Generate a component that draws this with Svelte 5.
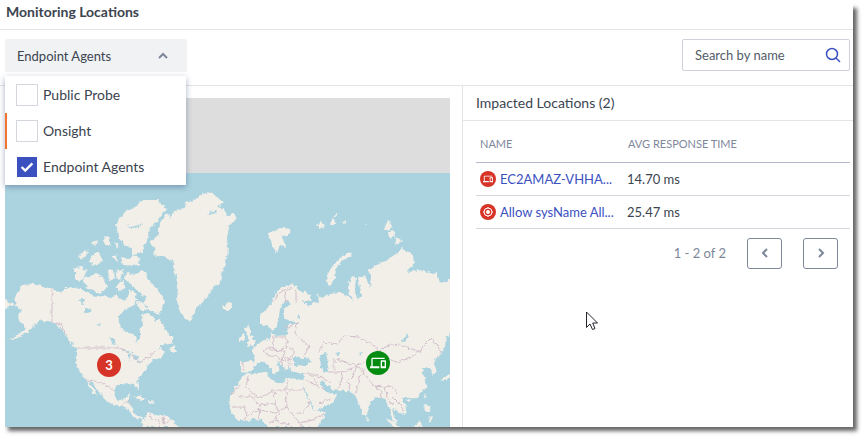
<script lang="ts">
    interface AgentType {
        id: string;
        label: string;
        checked: boolean;
        active?: boolean;
    }

    interface Location {
        name: string;
        kind: "device" | "probe";
        response: string;
    }

    let menuOpen = $state(true);
    let search = $state("");

    let agentTypes: AgentType[] = $state([
        { id: "public", label: "Public Probe", checked: false },
        { id: "onsight", label: "Onsight", checked: false, active: true },
        { id: "endpoint", label: "Endpoint Agents", checked: true },
    ]);

    const locations: Location[] = [
        { name: "EC2AMAZ-VHHA...", kind: "device", response: "14.70 ms" },
        { name: "Allow sysName All...", kind: "probe", response: "25.47 ms" },
    ];

    const land = [
        // North America
        "M5 299L10 302L17 305L14 299L17 294L22 286L30 283L42 286L52 289L60 292L64 289L70 287L80 289L88 292L96 297L104 296L111 298L116 294L121 299L125 301L128 296L130 290L135 293L137 300L132 306L124 310L118 317L120 327L128 333L135 336L137 343L140 337L140 330L143 325L142 315L148 314L153 317L155 322L160 318L163 325L168 333L173 339L173 343L163 345L157 350L162 348L165 353L160 358L153 360L147 365L145 370L142 375L137 380L139 390L137 389L134 384L128 383L123 385L117 385L114 390L115 397L118 401L123 400L126 396L131 395L129 400L127 403L133 407L134 413L137 416L143 417L142 419L136 418L130 413L126 408L120 406L112 404L104 399L103 396L97 390L92 382L89 381L94 389L97 395L92 392L89 385L87 380L83 377L78 369L76 365L77 357L77 349L73 345L67 337L62 330L55 323L47 322L40 320L35 325L28 332L20 336L5 342L20 333L26 328L20 322L17 317L21 310L15 305L5 308Z",
        // South America
        "M142 427L143 420L147 413L152 412L155 415L163 415L170 418L175 424L181 427Z",
        // Greenland
        "M149 243L157 236L160 223L167 213L170 218L177 208L184 210L187 200L193 202L200 195L206 193L213 194L218 198L223 202L217 208L225 208L227 216L233 213L237 218L230 225L227 237L228 253L223 270L221 283L213 288L207 297L202 303L198 307L193 315L191 322L185 318L180 312L177 302L178 285L175 273L172 260L163 257L153 255L156 249Z",
        // Arctic islands
        "M123 215L128 210L133 208L138 203L146 200L157 200L166 208L160 218L150 228L147 240L142 252L134 254L130 247L124 244L118 237L116 225L119 218Z",
        "M121 257L130 259L133 255L140 258L139 266L123 265Z",
        "M75 268L82 267L87 272L80 282L75 279Z",
        "M83 277L90 276L97 273L103 278L108 287L100 293L92 291L86 287Z",
        "M127 272L134 275L143 270L148 280L158 290L165 302L162 308L158 315L150 310L143 303L147 298L140 293L132 285L126 280Z",
        "M108 271L114 269L115 279L109 281ZM117 270L124 269L120 280L116 276ZM116 286L122 280L126 287L120 292Z",
        "M79 256L86 249L88 253L81 260ZM91 256L99 252L103 262L94 265L88 261ZM103 236L108 237L111 246L106 245ZM91 243L97 240L95 247ZM112 258L117 255L118 262ZM114 242L119 244L118 249Z",
        "M136 302L143 303L147 309L141 311Z",
        "M221 304L225 306L228 302L232 303L233 307L227 311L222 309Z",
        "M168 348L174 346L177 352L171 352Z",
        // Caribbean
        "M132 396L140 396L147 400L141 400ZM148 401L155 402L153 404L148 403Z",
        // Svalbard, Franz Josef Land and Novaya Zemlya
        "M268 233L274 231L278 230L283 227L291 231L287 237L281 235L286 247L280 245L276 253L272 244Z",
        "M317 225L322 222L325 227L319 229ZM329 223L334 219L337 225L331 225ZM341 222L346 221L344 224ZM334 215L337 214L337 217ZM365 223L367 223L366 224Z",
        "M328 284L326 277L333 265L341 257L350 252L352 255L342 261L336 270L334 280L331 285Z",
        "M385 224L389 220L392 227L389 230L384 231ZM388 231L394 230L395 238L389 237ZM397 236L402 241L395 245Z",
        // Scandinavia, Russia and Asia
        "M260 320L260 315L269 307L272 303L275 293L283 287L292 284L300 290L310 295L311 301L302 301L308 306L313 303L319 302L317 293L320 298L326 296L330 293L340 292L350 297L354 301L350 294L348 285L352 276L356 277L355 291L357 300L361 295L358 277L365 276L370 287L371 278L368 270L377 265L387 260L397 253L402 248L413 255L414 263L407 272L423 270L432 274L437 273L440 283L450 280L460 280L460 331L450 331L447 337L444 350L438 358L433 361L437 372L433 376L430 368L422 368L424 377L427 387L417 397L407 398L402 399L407 408L405 415L398 412L393 407L394 415L398 424L395 423L390 413L387 403L383 397L377 397L370 403L368 411L366 416L362 413L357 397L352 393L347 391L335 390L327 388L320 383L328 393L337 395L333 402L315 411L310 400L303 385L304 373L292 373L290 367L284 371L280 365L276 362L280 370L274 374L268 365L262 361L255 366L252 371L243 373L240 371L240 362L255 361L252 350L257 345L262 342L270 338L272 332L276 336L287 335L288 325L300 323L290 321L284 318L284 309L290 303L286 300L280 308L279 317L276 328L272 331L267 326L262 326Z",
        // Africa
        "M230 397L237 384L245 374L258 373L267 372L268 378L280 383L288 378L303 380L303 388L309 400L313 410L326 412L323 418L317 427L268 427L263 420L253 419L243 422L237 419L232 413L229 407Z",
        // British Isles
        "M245 328L249 325L250 333L255 341L255 345L246 346L249 340ZM239 337L244 334L245 340L239 342Z",
        // Japan, Taiwan, Philippines and Sri Lanka
        "M440 379L446 376L450 374L450 378L442 381ZM424 394L427 395L425 399ZM424 404L429 405L430 413L425 411ZM428 417L433 416L431 422ZM366 416L369 419L367 421Z",
        "M386 418L392 421L400 427L394 427ZM412 427L420 420L422 427ZM406 400L410 399L409 402Z",
    ];

    const water = [
        // Black Sea, Caspian Sea and Aral Sea
        "M293 360L296 356L302 359L307 357L312 362L305 365L295 366Z",
        "M320 356L325 353L328 357L327 362L329 371L324 373L321 367Z",
        "M336 354L339 352L339 356Z",
        // Adriatic and Persian Gulf
        "M276 360L284 367L286 371L282 370Z",
        "M320 383L325 389L331 391L334 389L329 387L323 381Z",
        // Great Lakes and northern lakes
        "M123 350L129 350L133 353L127 354ZM128 355L131 354L129 362L128 361ZM133 354L138 357L137 361L134 359ZM136 362L142 360L140 363Z",
        "M110 337L113 337L116 345L112 344ZM95 325L101 323L99 326ZM84 311L88 308L92 311L86 314ZM78 300L85 299L83 304Z",
        // Baikal and Ladoga
        "M402 341L409 333L408 337L404 342ZM296 317L299 315L299 319ZM358 354L364 353L361 356Z",
        // Sounds of Ellesmere Island
        "M124 223L131 227L142 224L141 226L132 229ZM208 213L216 210L217 213L211 215Z",
    ];

    const borders = [
        "M52 289V322L60 324L67 335M78 348H118L125 350L133 356L138 362L150 357L156 350M87 380L101 382L107 386L114 391M122 406L126 401L132 404M150 413L151 419L158 420L161 427M164 416L163 424L170 420",
        "M274 303L278 294L284 290L292 287L296 291L296 303M285 291L287 302M284 326L290 327L297 323L295 333L300 339L309 346L304 356M272 337L286 337L287 346L280 351L270 347L264 350M274 338L273 347M287 346L294 350L291 360L284 358M262 350L270 357L277 355L283 365M243 362L243 371M270 350L285 351L282 360L291 363L288 369",
        "M319 352L323 342L337 344L344 336L359 337L375 346L379 351L366 360L356 366L334 358L334 370M379 351L392 344L405 346L420 352L423 346L431 338L441 351L437 358M379 351L385 358L397 362L410 358L421 349M356 366L363 372L368 379L374 386L383 387L392 386L397 393M328 372L343 372L357 366L353 376L348 381L350 391M343 372L341 382L338 389M357 366L365 370L359 377L357 390L354 394M304 374L311 374L321 377L330 383M305 380L318 386L325 390M311 374L318 385M318 404L330 399M385 386L387 397L393 405M393 397L399 403L404 411M374 386L382 391L380 397",
        "M241 383L230 395M248 376L246 388L259 398L265 395L275 390L286 390L288 379M288 390H305M239 397H252L259 405L275 403L274 390M286 390L287 407L293 415L304 412L310 401M232 407L244 407L247 415L244 421M247 415L260 410L275 413L287 407M260 410L258 420M275 403L279 413L274 421L268 424M293 415L300 423L312 420L324 414M300 423L302 427M274 421L290 425",
    ];
</script>

{#snippet deviceIcon()}
    <svg class="device-icon" viewBox="0 0 24 24" aria-hidden="true">
        <path
            fill="currentColor"
            d="M4 6h18V4H4c-1.1 0-2 .9-2 2v11H0v3h14v-3H4V6zm19 2h-6c-.55 0-1 .45-1 1v10c0 .55.45 1 1 1h6c.55 0 1-.45 1-1V9c0-.55-.45-1-1-1zm-1 9h-4v-7h4v7z"
        />
    </svg>
{/snippet}

<main class="window">
    <header class="title-bar">
        <h1>Monitoring Locations</h1>
    </header>

    <div class="toolbar">
        <div class="dropdown">
            <button
                class="dropdown-toggle"
                aria-expanded={menuOpen}
                onclick={() => (menuOpen = !menuOpen)}
            >
                Endpoint Agents
                <svg class="chevron" class:closed={!menuOpen} viewBox="0 0 10 10" aria-hidden="true">
                    <path d="M1 7l4-4 4 4" />
                </svg>
            </button>
            {#if menuOpen}
                <div class="dropdown-menu">
                    {#each agentTypes as type (type.id)}
                        <label class="option" class:active={type.active}>
                            <input type="checkbox" bind:checked={type.checked} />
                            <svg class="tick" viewBox="0 0 20 20" aria-hidden="true">
                                <path d="M4 10l4 4 8-8" />
                            </svg>
                            <span>{type.label}</span>
                        </label>
                    {/each}
                </div>
            {/if}
        </div>

        <div class="search">
            <input
                type="text"
                aria-label="Search by name"
                placeholder="Search by name"
                bind:value={search}
            />
            <button class="search-btn" aria-label="Search">
                <svg viewBox="0 0 16 16" aria-hidden="true">
                    <circle cx="7" cy="7" r="5.5" />
                    <path d="M11 11l4 4" />
                </svg>
            </button>
        </div>
    </div>

    <div class="content">
        <section class="map-pane">
            <div class="map">
                <svg class="world" viewBox="5 173 445 254" preserveAspectRatio="xMidYMin slice" aria-hidden="true">
                    <defs>
                        <!-- roughens the coastlines -->
                        <filter
                            id="coast"
                            x="0"
                            y="0"
                            width="1"
                            height="1"
                            color-interpolation-filters="sRGB"
                        >
                            <feTurbulence type="fractalNoise" baseFrequency="0.25" numOctaves="2" seed="4" />
                            <feDisplacementMap in="SourceGraphic" scale="5" xChannelSelector="R" yChannelSelector="G" />
                        </filter>
                    </defs>
                    <g filter="url(#coast)">
                        <rect class="sea" x="-5" y="163" width="465" height="274" />
                        {#each land as d}
                            <path class="land" {d} />
                        {/each}
                        {#each water as d}
                            <path class="sea" {d} />
                        {/each}
                        {#each borders as d}
                            <path class="border" {d} />
                        {/each}
                    </g>
                </svg>
                <button class="marker cluster">3</button>
                <button class="marker endpoint" aria-label="Endpoint agent">
                    {@render deviceIcon()}
                </button>
            </div>
        </section>

        <section class="list-pane">
            <h2>Impacted Locations (2)</h2>
            <div class="list-body">
                <table>
                    <thead>
                        <tr>
                            <th class="name-col">NAME</th>
                            <th>AVG RESPONSE TIME</th>
                        </tr>
                    </thead>
                    <tbody>
                        {#each locations as location (location.name)}
                            <tr>
                                <td>
                                    <a class="location" href="#location">
                                        <span class="badge">
                                            {#if location.kind === "device"}
                                                {@render deviceIcon()}
                                            {:else}
                                                <svg class="probe-icon" viewBox="0 0 12 12" aria-hidden="true">
                                                    <circle cx="6" cy="6" r="4" />
                                                    <circle class="dot" cx="6" cy="6" r="2" />
                                                    <path d="M6 1v1M6 10v1M1 6h1M10 6h1" />
                                                </svg>
                                            {/if}
                                        </span>
                                        {location.name}
                                    </a>
                                </td>
                                <td>{location.response}</td>
                            </tr>
                        {/each}
                    </tbody>
                </table>
                <nav class="pager">
                    <span>1 - 2 of 2</span>
                    <button aria-label="Previous page">
                        <svg viewBox="0 0 10 10" aria-hidden="true"><path d="M7 1L3 5l4 4" /></svg>
                    </button>
                    <button aria-label="Next page">
                        <svg viewBox="0 0 10 10" aria-hidden="true"><path d="M3 1l4 4-4 4" /></svg>
                    </button>
                </nav>
            </div>
        </section>
    </div>

    <svg class="pointer" viewBox="0 0 12 20" aria-hidden="true">
        <path d="M.5 1v15.500l3.500-3.500 2.500 5.500 2.500-1-2.300-5.500h4.800z" />
    </svg>
</main>

<style>
    :global(body) {
        background: #fff;
        font-family: Lato, "Liberation Sans", sans-serif;
    }

    .window {
        position: relative;
        display: flex;
        flex-direction: column;
        box-sizing: border-box;
        min-height: calc(100vh - 15px);
        margin: 0 15px 15px 0;
        background: #fff;
        color: #3b444f;
        font-size: 13px;
        line-height: 20px;
        box-shadow: 6px 6px 4px -2px rgba(0, 0, 0, 0.6);
    }

    button,
    input {
        font: inherit;
        color: inherit;
    }

    button {
        cursor: pointer;
    }

    .title-bar {
        padding: 2px 6px 7px;
        border-bottom: 1px solid #e4e4e6;
    }

    h1 {
        margin: 0;
        font-size: 14px;
        font-weight: 700;
        line-height: 20px;
    }

    .toolbar {
        display: flex;
        justify-content: space-between;
        align-items: flex-start;
        padding: 9px 3px 13px 5px;
        border-bottom: 1px solid #e4e4e6;
    }

    .dropdown {
        position: relative;
        width: 182px;
    }

    .dropdown-toggle {
        display: flex;
        justify-content: space-between;
        align-items: center;
        width: 100%;
        height: 33px;
        padding: 0 19px 0 12px;
        border: none;
        border-radius: 2px;
        background: #f1f2f4;
    }

    .chevron {
        width: 10px;
        height: 10px;
        fill: none;
        stroke: #7c8798;
        stroke-width: 2;
    }

    .chevron.closed {
        transform: rotate(180deg);
    }

    .dropdown-menu {
        position: absolute;
        top: 37px;
        left: 0;
        z-index: 2;
        box-sizing: border-box;
        width: 181px;
        padding-top: 1px;
        background: #fff;
        box-shadow: 0 2px 6px rgba(40, 60, 110, 0.4);
    }

    .option {
        display: grid;
        grid-template-columns: 22px 1fr;
        align-items: center;
        gap: 5px;
        height: 36px;
        padding-left: 9px;
        border-left: 2px solid transparent;
        font-size: 14px;
        cursor: pointer;
    }

    .option.active {
        border-left-color: #f1752f;
    }

    .option input {
        grid-area: 1 / 1;
        appearance: none;
        width: 22px;
        height: 22px;
        margin: 0;
        border: 1px solid #d5d7df;
        background: #fff;
    }

    .option input:checked {
        border-color: #fff;
        background: #3b51bf;
    }

    .option span {
        grid-area: 1 / 2;
    }

    .tick {
        grid-area: 1 / 1;
        justify-self: center;
        width: 18px;
        height: 18px;
        fill: none;
        stroke: #fff;
        stroke-width: 2.5;
        pointer-events: none;
    }

    .search {
        display: flex;
        align-items: center;
        box-sizing: border-box;
        width: 168px;
        height: 32px;
        padding: 0 8px 0 12px;
        border: 1px solid #cfd1da;
        border-radius: 2px;
    }

    .search input {
        flex: 1;
        min-width: 0;
        padding: 0;
        border: none;
        outline: none;
        background: none;
    }

    .search input::placeholder {
        color: #525b68;
        opacity: 1;
    }

    .search-btn {
        display: flex;
        padding: 0;
        border: none;
        background: none;
    }

    .search-btn svg {
        width: 16px;
        height: 16px;
        fill: none;
        stroke: #3b51bf;
        stroke-width: 1.5;
    }

    .content {
        flex: 1;
        display: grid;
        grid-template-columns: 462fr 391fr;
    }

    .map-pane {
        display: flex;
        padding: 12px 12px 0 5px;
    }

    .map {
        position: relative;
        flex: 1;
        display: flex;
        padding-top: 75px;
        background: #ddd;
    }

    .world {
        flex: 1;
        width: 100%;
        min-width: 0;
        background: #aad3df;
    }

    .sea {
        fill: #aad3df;
    }

    .land {
        fill: #f2efe9;
    }

    .border {
        fill: none;
        stroke: #d3c0cc;
        stroke-width: 1;
    }

    .marker {
        position: absolute;
        display: flex;
        justify-content: center;
        align-items: center;
        width: 24px;
        height: 24px;
        padding: 0;
        border: none;
        border-radius: 50%;
        color: #fff;
        transform: translate(-50%, -50%);
    }

    .marker.cluster {
        top: 267px;
        left: 23.4%;
        background: #d63426;
        font-weight: 700;
    }

    .marker.endpoint {
        top: 265px;
        left: 83.8%;
        background: #048c11;
    }

    .marker .device-icon {
        width: 16px;
        height: 16px;
    }

    .list-pane {
        border-left: 1px solid #e4e4e6;
    }

    h2 {
        margin: 0;
        padding: 7px 13px;
        border-bottom: 1px solid #e4e4e6;
        font-size: 14px;
        font-weight: 400;
        line-height: 20px;
    }

    .list-body {
        padding: 0 3px 0 13px;
    }

    table {
        width: 100%;
        border-collapse: collapse;
        table-layout: fixed;
    }

    th {
        height: 41px;
        padding: 6px 4px 0;
        box-sizing: border-box;
        border-bottom: 1px solid #b3b8cc;
        color: #7e879d;
        font-size: 11px;
        font-weight: 400;
        text-align: left;
    }

    .name-col {
        width: 148px;
    }

    td {
        height: 33px;
        box-sizing: border-box;
        padding: 0 3px;
        border-bottom: 1px solid #d5d7de;
        white-space: nowrap;
    }

    td:first-child {
        padding: 0 4px;
    }

    .location {
        display: flex;
        align-items: center;
        gap: 4px;
        color: #3b51bf;
        text-decoration: none;
    }

    .badge {
        flex-shrink: 0;
        display: flex;
        justify-content: center;
        align-items: center;
        width: 16px;
        height: 16px;
        border-radius: 50%;
        background: #d63426;
        color: #fff;
    }

    .badge .device-icon {
        width: 10px;
        height: 10px;
    }

    .probe-icon {
        width: 12px;
        height: 12px;
        fill: none;
        stroke: #fff;
        stroke-width: 1;
    }

    .probe-icon .dot {
        fill: #fff;
        stroke: none;
    }

    .pager {
        display: flex;
        justify-content: flex-end;
        align-items: center;
        gap: 21px;
        padding: 9px 12px 9px 0;
        color: #7c8798;
    }

    .pager button {
        display: flex;
        justify-content: center;
        align-items: center;
        width: 35px;
        height: 31px;
        padding: 0;
        border: 1px solid #7c8798;
        border-radius: 3px;
        background: #fff;
    }

    .pager svg {
        width: 10px;
        height: 10px;
        fill: none;
        stroke: #7c8798;
        stroke-width: 2;
    }

    .pointer {
        position: absolute;
        top: 311px;
        left: 586px;
        width: 12px;
        height: 20px;
        fill: #fff;
        stroke: #23232d;
        stroke-width: 1;
        pointer-events: none;
    }
</style>
